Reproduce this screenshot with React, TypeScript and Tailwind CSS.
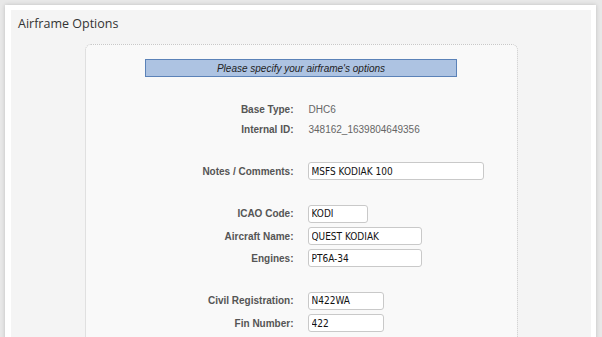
export default function App() {
  const label = "w-[208px] shrink-0 text-right font-bold text-[10px] text-[#555]";
  const input =
    "h-[18px] rounded-[3px] border border-[#c9c9c9] bg-white px-[3px] font-['DejaVu_Sans_Condensed','DejaVu_Sans',sans-serif] text-[10px] text-[#111] outline-none";

  return (
    <div className="h-[337px] w-[602px] overflow-hidden bg-[#e8e8e8] pl-[5px] pt-[5px] font-['Liberation_Sans',Arial,sans-serif]">
      <div className="h-[400px] w-[591px] border-[5px] border-l-[6px] border-white bg-[#f4f4f4] shadow-[0_0_4px_rgba(0,0,0,0.18)]">
        <h1 className="pl-[7px] pt-[4px] font-['Open_Sans',sans-serif] text-[12.5px] leading-[20px] text-[#333]">
          Airframe Options
        </h1>

        <div className="mx-auto mt-[10px] h-[320px] w-[433px] rounded-[6px] border border-dotted border-[#c8c8c8] bg-[#f9f9f9] pt-[14px]">
          <div className="mx-auto flex h-[18px] w-[312px] items-center justify-center border border-[#5b82b8] bg-[#adc3e2] text-[10px] italic text-[#222]">
            Please specify your airframe's options
          </div>

          <div className="mt-[22px] flex h-[20px] items-center gap-[14px]">
            <span className={label}>Base Type:</span>
            <span className="pl-[1px] text-[10px] text-[#666]">DHC6</span>
          </div>
          <div className="flex h-[20px] items-center gap-[14px]">
            <span className={label}>Internal ID:</span>
            <span className="pl-[1px] text-[10px] text-[#666]">348162_1639804649356</span>
          </div>

          <div className="mt-[21px] flex h-[22px] items-center gap-[14px]">
            <span className={label}>Notes / Comments:</span>
            <input className={`${input} w-[176px]`} defaultValue="MSFS KODIAK 100" />
          </div>

          <div className="mt-[20px] flex h-[23px] items-center gap-[14px]">
            <span className={label}>ICAO Code:</span>
            <input className={`${input} w-[60px]`} defaultValue="KODI" />
          </div>
          <div className="flex h-[22px] items-center gap-[14px]">
            <span className={label}>Aircraft Name:</span>
            <input className={`${input} w-[114px]`} defaultValue="QUEST KODIAK" />
          </div>
          <div className="flex h-[22px] items-center gap-[14px]">
            <span className={label}>Engines:</span>
            <input className={`${input} w-[114px]`} defaultValue="PT6A-34" />
          </div>

          <div className="mt-[20px] flex h-[23px] items-center gap-[14px]">
            <span className={label}>Civil Registration:</span>
            <input className={`${input} w-[76px]`} defaultValue="N422WA" />
          </div>
          <div className="flex h-[22px] items-center gap-[14px]">
            <span className={label}>Fin Number:</span>
            <input className={`${input} w-[76px]`} defaultValue="422" />
          </div>
        </div>
      </div>
    </div>
  );
}
